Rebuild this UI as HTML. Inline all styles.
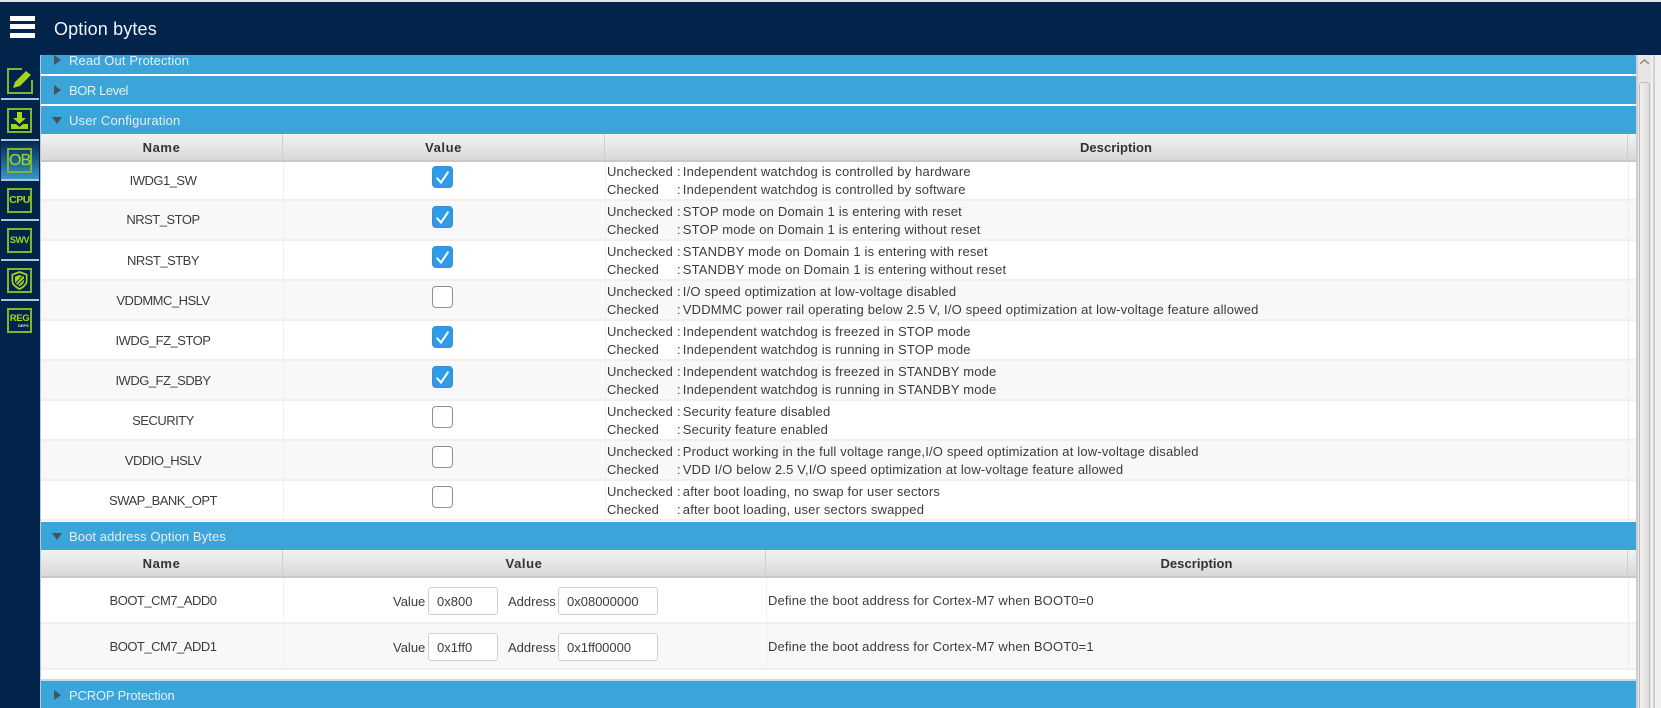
<!DOCTYPE html>
<html><head><meta charset="utf-8"><style>
*{box-sizing:border-box}
html,body{margin:0;padding:0}
body{width:1661px;height:708px;position:relative;overflow:hidden;background:#fff;font-family:"Liberation Sans",sans-serif;font-size:13px;color:#3c3c3c}
.a{position:absolute}
.bar{position:absolute;left:41px;width:1595px;background:#3ba5da;color:#e3f0f8;font-size:13px;line-height:30px;padding-left:28px;overflow:hidden;letter-spacing:.17px}
.tri{position:absolute;left:13px;width:0;height:0}
.r{border-left:7px solid #46525e;border-top:5px solid transparent;border-bottom:5px solid transparent}
.d{border-top:7px solid #46525e;border-left:5px solid transparent;border-right:5px solid transparent;left:11px}
.th{position:absolute;height:28px;background:linear-gradient(#f2f2f2,#d9d9d9);border-bottom:2px solid #c8c8c8;border-right:1px solid #cfcfcf;text-align:center;font-weight:bold;color:#333;line-height:27px;font-size:13px;letter-spacing:.6px}
.th.w{letter-spacing:.05px}
.row{position:absolute;left:41px;width:1595px;border-bottom:2px solid #f0f0f0}
.row.o{background:#f8f8f8}
.nm{position:absolute;left:0;width:244px;text-align:center;top:0;line-height:37px;font-size:13px;letter-spacing:-.5px}
.vl{position:absolute;left:242px;width:1px;top:0;bottom:0;background:#f0f0f0}
.vl2{position:absolute;left:564px;width:1px;top:0;bottom:0;background:#f0f0f0}
.vl3{position:absolute;left:1587px;width:1px;top:0;bottom:0;background:#ececec}
.ds{position:absolute;left:566px;top:1px;line-height:18px;white-space:pre;font-size:13px;letter-spacing:.18px}
.ds i{display:inline-block;position:relative;width:72px;font-style:normal;letter-spacing:.1px}
.ds u{position:absolute;left:70px;top:0;text-decoration:none}
.cb{position:absolute;left:391px;top:4px;width:21px;height:22px;border-radius:4px;background:#2f9ae8;border:1px solid #3a8ec9}
.cb.u{background:#fff;border:1px solid #8f8f8f}
.cb svg{position:absolute;left:0;top:0}
.ip{position:absolute;height:28px;border:1px solid #cfcfcf;border-radius:3px;background:#fff;line-height:28px;padding-left:8px;font-size:13px}
.lb{position:absolute;font-size:13px;line-height:30px}
.sep{position:absolute;left:1px;width:38px;height:2px;background:#a9c6de}
.ic{position:absolute;left:7px;width:25px;height:25px;border:2px solid #7fb62e;color:#a4d51f;font-weight:bold;text-align:center}
</style></head><body>
<div class="a" style="left:0;top:0;width:1661px;height:2px;background:#dfe6ec"></div>
<div class="a" style="left:0;top:2px;width:1661px;height:53px;background:#02244b"></div>
<div class="a" style="left:0;top:55px;width:40px;height:653px;background:#02244b"></div>
<div class="a" style="left:10px;top:16px;width:25px;height:5px;background:#fff"></div>
<div class="a" style="left:10px;top:24px;width:25px;height:5px;background:#fff"></div>
<div class="a" style="left:10px;top:33px;width:25px;height:5px;background:#fff"></div>
<div class="a" style="left:54px;top:17px;font-size:18px;line-height:24px;color:#eef3f7;letter-spacing:.15px">Option bytes</div>

<div class="a" style="left:1px;top:140px;width:38px;height:40px;background:linear-gradient(#02244b,#3a98d0)"></div>
<div class="sep" style="top:98px"></div><div class="sep" style="top:139px"></div><div class="sep" style="top:179px"></div><div class="sep" style="top:219px"></div><div class="sep" style="top:259px"></div><div class="sep" style="top:299px"></div>

<svg class="a" style="left:7px;top:68px" width="26" height="26" viewBox="0 0 26 26"><path d="M25 12V25H1V1H15" stroke="#7fb62e" stroke-width="2" fill="none"/><path d="M6 20l2-6L19 3l5 4L13 18z" fill="#a4d51f"/></svg>

<div class="ic" style="top:108px"></div>
<svg class="a" style="left:7px;top:108px" width="25" height="25" viewBox="0 0 25 25"><path d="M10 4h5v6h4l-6.500 6-6.500-6h4z" fill="#a4d51f"/><path d="M4 16h5l3.500 3 3.500-3h5v5H4z" fill="#a4d51f"/></svg>

<div class="ic" style="top:148px;font-weight:normal;font-size:16px;line-height:22px;color:#93d23c;letter-spacing:-.8px;-webkit-text-stroke:.2px #93d23c">OB</div>
<div class="ic" style="top:188px;font-size:10.5px;line-height:21px;letter-spacing:-.5px">CPU</div>
<div class="ic" style="top:228px;font-size:9px;line-height:21px;letter-spacing:-.4px">SWV</div>
<div class="ic" style="top:268px"></div>
<svg class="a" style="left:7px;top:268px" width="25" height="25" viewBox="0 0 25 25"><path d="M12.500 3l8 3v7c0 4-4 7-8 9-4-2-8-5-8-9V6z" fill="#a4d51f"/><path d="M12.500 5l6.300 2.300V13c0 3-3.300 5.300-6.300 7-3-1.700-6.300-4-6.300-7V7.300z" fill="#02244b"/><path d="M12.500 7l4.500 1.600V13c0 2.200-2.400 4-4.500 5.200C10.400 17 8 15.200 8 13V8.600z" fill="#a4d51f"/><path d="M9 15l6-6.500M11 17l6-6" stroke="#02244b" stroke-width="1"/></svg>
<div class="ic" style="top:308px;font-size:9.5px;line-height:18px;letter-spacing:-.4px">REG<div style="position:absolute;left:9px;top:13px;font-size:4px;line-height:6px;color:#dfe6ec;letter-spacing:0">DEFS</div></div>

<div class="a" style="left:40px;top:55px;width:1px;height:653px;background:#b9c8d3"></div>

<div class="bar" style="top:55px;height:19px;line-height:12px;letter-spacing:.12px"><span class="tri r" style="top:0"></span>Read Out Protection</div>
<div class="bar" style="top:76px;height:28px;letter-spacing:-.43px"><span class="tri r" style="top:9px"></span>BOR Level</div>
<div class="bar" style="top:106px;height:28px"><span class="tri d" style="top:11px"></span>User Configuration</div>

<div class="th" style="left:41px;top:134px;width:242px">Name</div>
<div class="th" style="left:283px;top:134px;width:322px">Value</div>
<div class="th w" style="left:605px;top:134px;width:1023px">Description</div>
<div class="th" style="left:1628px;top:134px;width:8px;border-right:0"></div>

<div class="row" style="top:162px;height:39px"><div class="vl"></div><div class="vl2"></div><div class="vl3"></div><div class="nm">IWDG1_SW</div><div class="cb"><svg width="19" height="20" viewBox="0 0 19 20"><path d="M3.700 10.800L8 15.500 15.300 4.700" stroke="#fff" stroke-width="2" fill="none"/></svg></div><div class="ds"><i>Unchecked<u>:</u></i> Independent watchdog is controlled by hardware
<i>Checked<u>:</u></i> Independent watchdog is controlled by software</div></div>
<div class="row o" style="top:201px;height:40px"><div class="vl"></div><div class="vl2"></div><div class="vl3"></div><div class="nm" style="line-height:38px">NRST_STOP</div><div class="cb" style="top:5px"><svg width="19" height="20" viewBox="0 0 19 20"><path d="M3.700 10.800L8 15.500 15.300 4.700" stroke="#fff" stroke-width="2" fill="none"/></svg></div><div class="ds" style="top:2px"><i>Unchecked<u>:</u></i> STOP mode on Domain 1 is entering with reset
<i>Checked<u>:</u></i> STOP mode on Domain 1 is entering without reset</div></div>
<div class="row" style="top:241px;height:40px"><div class="vl"></div><div class="vl2"></div><div class="vl3"></div><div class="nm" style="line-height:39px">NRST_STBY</div><div class="cb" style="top:5px"><svg width="19" height="20" viewBox="0 0 19 20"><path d="M3.700 10.800L8 15.500 15.300 4.700" stroke="#fff" stroke-width="2" fill="none"/></svg></div><div class="ds" style="top:2px"><i>Unchecked<u>:</u></i> STANDBY mode on Domain 1 is entering with reset
<i>Checked<u>:</u></i> STANDBY mode on Domain 1 is entering without reset</div></div>
<div class="row o" style="top:281px;height:40px"><div class="vl"></div><div class="vl2"></div><div class="vl3"></div><div class="nm" style="line-height:39px">VDDMMC_HSLV</div><div class="cb u" style="top:5px"></div><div class="ds" style="top:2px"><i>Unchecked<u>:</u></i> I/O speed optimization at low-voltage disabled
<i>Checked<u>:</u></i> VDDMMC power rail operating below 2.5 V, I/O speed optimization at low-voltage feature allowed</div></div>
<div class="row" style="top:321px;height:40px"><div class="vl"></div><div class="vl2"></div><div class="vl3"></div><div class="nm" style="line-height:39px">IWDG_FZ_STOP</div><div class="cb" style="top:5px"><svg width="19" height="20" viewBox="0 0 19 20"><path d="M3.700 10.800L8 15.500 15.300 4.700" stroke="#fff" stroke-width="2" fill="none"/></svg></div><div class="ds" style="top:2px"><i>Unchecked<u>:</u></i> Independent watchdog is freezed in STOP mode
<i>Checked<u>:</u></i> Independent watchdog is running in STOP mode</div></div>
<div class="row o" style="top:361px;height:40px"><div class="vl"></div><div class="vl2"></div><div class="vl3"></div><div class="nm" style="line-height:39px">IWDG_FZ_SDBY</div><div class="cb" style="top:5px"><svg width="19" height="20" viewBox="0 0 19 20"><path d="M3.700 10.800L8 15.500 15.300 4.700" stroke="#fff" stroke-width="2" fill="none"/></svg></div><div class="ds" style="top:2px"><i>Unchecked<u>:</u></i> Independent watchdog is freezed in STANDBY mode
<i>Checked<u>:</u></i> Independent watchdog is running in STANDBY mode</div></div>
<div class="row" style="top:401px;height:40px"><div class="vl"></div><div class="vl2"></div><div class="vl3"></div><div class="nm" style="line-height:39px">SECURITY</div><div class="cb u" style="top:5px"></div><div class="ds" style="top:2px"><i>Unchecked<u>:</u></i> Security feature disabled
<i>Checked<u>:</u></i> Security feature enabled</div></div>
<div class="row o" style="top:441px;height:40px"><div class="vl"></div><div class="vl2"></div><div class="vl3"></div><div class="nm" style="line-height:39px">VDDIO_HSLV</div><div class="cb u" style="top:5px"></div><div class="ds" style="top:2px"><i>Unchecked<u>:</u></i> Product working in the full voltage range,I/O speed optimization at low-voltage disabled
<i>Checked<u>:</u></i> VDD I/O below 2.5 V,I/O speed optimization at low-voltage feature allowed</div></div>
<div class="row" style="top:481px;height:40px"><div class="vl"></div><div class="vl2"></div><div class="vl3"></div><div class="nm" style="line-height:39px">SWAP_BANK_OPT</div><div class="cb u" style="top:5px"></div><div class="ds" style="top:2px"><i>Unchecked<u>:</u></i> after boot loading, no swap for user sectors
<i>Checked<u>:</u></i> after boot loading, user sectors swapped</div></div>

<div class="bar" style="top:522px;height:28px;letter-spacing:.09px"><span class="tri d" style="top:11px"></span>Boot address Option Bytes</div>
<div class="th" style="left:41px;top:550px;width:242px">Name</div>
<div class="th" style="left:283px;top:550px;width:483px">Value</div>
<div class="th w" style="left:766px;top:550px;width:862px">Description</div>
<div class="th" style="left:1628px;top:550px;width:8px;border-right:0"></div>

<div class="row" style="top:578px;height:46px"><div class="vl"></div><div class="vl3"></div><div class="a" style="left:725px;top:0;bottom:0;width:1px;background:#f0f0f0"></div><div class="nm" style="line-height:46px">BOOT_CM7_ADD0</div><div class="a" style="left:727px;top:0;line-height:46px;letter-spacing:.15px">Define the boot address for Cortex-M7 when BOOT0=0</div></div>
<div class="row o" style="top:624px;height:46px"><div class="vl"></div><div class="vl3"></div><div class="a" style="left:725px;top:0;bottom:0;width:1px;background:#f0f0f0"></div><div class="nm" style="line-height:46px">BOOT_CM7_ADD1</div><div class="a" style="left:727px;top:0;line-height:46px;letter-spacing:.15px">Define the boot address for Cortex-M7 when BOOT0=1</div></div>
<div class="lb" style="left:393px;top:587px">Value</div><div class="ip" style="left:428px;top:587px;width:70px">0x800</div>
<div class="lb" style="left:508px;top:587px">Address</div><div class="ip" style="left:558px;top:587px;width:100px">0x08000000</div>
<div class="lb" style="left:393px;top:633px">Value</div><div class="ip" style="left:428px;top:633px;width:70px">0x1ff0</div>
<div class="lb" style="left:508px;top:633px">Address</div><div class="ip" style="left:558px;top:633px;width:100px">0x1ff00000</div>

<div class="a" style="left:41px;top:679px;width:1595px;height:2px;background:#c6dbe6"></div>
<div class="bar" style="top:681px;height:27px;letter-spacing:-.16px"><span class="tri r" style="top:9px"></span>PCROP Protection</div>

<div class="a" style="left:1636px;top:55px;width:25px;height:653px;background:#f0f0f0"></div>
<div class="a" style="left:1636px;top:55px;width:2px;height:653px;background:#d0d0d0"></div>
<div class="a" style="left:1638px;top:55px;width:13px;height:653px;background:#e6e6e6"></div>
<div class="a" style="left:1639px;top:82px;width:11px;height:626px;background:linear-gradient(90deg,#f2f2f2,#dcdcdc);border:1px solid #bdbdbd;border-bottom:0;border-radius:3px 3px 0 0"></div>
<div class="a" style="left:1653px;top:55px;width:2px;height:653px;background:#d0d0d0"></div>
<svg class="a" style="left:1639px;top:58px" width="11" height="8" viewBox="0 0 11 8"><path d="M1 6l4.500-4L10 6" stroke="#8a8a8a" stroke-width="1.500" fill="none"/></svg>
</body></html>
